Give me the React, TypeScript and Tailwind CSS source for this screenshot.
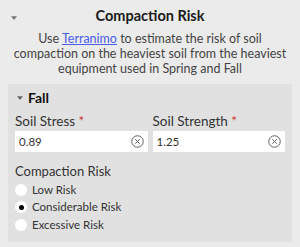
import * as React from 'react'

const FONT = { fontFamily: 'Lato, "Open Sans", sans-serif' }

function Caret({ className }: { className?: string }): React.JSX.Element {
  return (
    <svg viewBox="0 0 8 5" className={className} aria-hidden>
      <path d="M0 0h8L4 5z" fill="currentColor" />
    </svg>
  )
}

function ClearIcon(): React.JSX.Element {
  return (
    <svg viewBox="0 0 14 14" className="size-[13px] shrink-0 text-[#555]" aria-hidden>
      <circle cx="7" cy="7" r="6.2" fill="none" stroke="currentColor" strokeWidth="1" />
      <path d="M4.6 4.6l4.8 4.8M9.4 4.6l-4.8 4.8" stroke="currentColor" strokeWidth="1" />
    </svg>
  )
}

function NumberField({ label, value }: { label: string; value: string }): React.JSX.Element {
  return (
    <div className="flex min-w-0 flex-1 flex-col">
      <label className="text-[13.5px] leading-[16px] text-[#333]">
        {label} <span className="text-[#d0312d]">*</span>
      </label>
      <div className="mt-[2px] flex h-[21px] items-center bg-white pl-[4px] pr-[4px]">
        <span className="flex-1 text-[11.5px] leading-[14px] text-[#333]">{value}</span>
        <ClearIcon />
      </div>
    </div>
  )
}

const risks = ['Low Risk', 'Considerable Risk', 'Excessive Risk']

export default function App(): React.JSX.Element {
  const [selected, setSelected] = React.useState('Considerable Risk')

  return (
    <div className="h-[247px] w-[300px] overflow-hidden bg-[#ebebeb] pt-[2px]" style={FONT}>
      <div className="relative flex h-[28px] items-center justify-center">
        <Caret className="absolute left-[11px] top-[14px] h-[4px] w-[6px] text-[#777]" />
        <h2 className="text-[14.5px] leading-[18px] font-bold text-[#1a1a1a]">Compaction Risk</h2>
      </div>
      <p className="mt-[1px] px-[10px] text-center text-[12.5px] leading-[15px] text-[#444]">
        Use{' '}
        <a href="#" className="text-[#4a5df0] underline">
          Terranimo
        </a>{' '}
        to estimate the risk of soil compaction on the heaviest soil from the heaviest equipment
        used in Spring and Fall
      </p>

      <div className="mx-[8px] mt-[8px] h-[158px] bg-[#e1e1e1] px-[7px] pt-[5px]">
        <div className="flex h-[17px] items-center gap-[5px]">
          <Caret className="ml-[2px] h-[4px] w-[6px] text-[#666]" />
          <h3 className="text-[14px] leading-[17px] font-bold text-[#111]">Fall</h3>
        </div>
        <div className="mt-[7px] flex gap-[5px]">
          <NumberField label="Soil Stress" value="0.89" />
          <NumberField label="Soil Strength" value="1.25" />
        </div>
        <div className="mt-[11px] text-[13px] leading-[16px] text-[#333]">Compaction Risk</div>
        <div className="mt-[2px] flex flex-col">
          {risks.map((risk) => (
            <label key={risk} className="flex h-[17.5px] cursor-pointer items-center gap-[5px]">
              <span
                className="flex size-[12px] items-center justify-center rounded-full bg-white"
                onClick={() => setSelected(risk)}
              >
                {selected === risk ? <span className="size-[5px] rounded-full bg-black" /> : null}
              </span>
              <span className="text-[11.5px] leading-[14px] text-[#333]">{risk}</span>
            </label>
          ))}
        </div>
      </div>
    </div>
  )
}
